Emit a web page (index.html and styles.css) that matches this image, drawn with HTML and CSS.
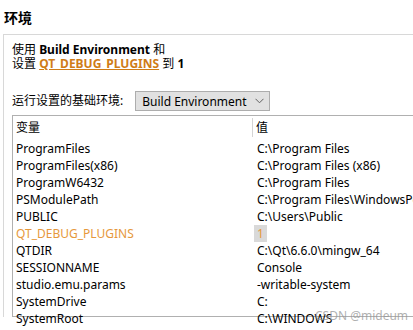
FILE: index.html
```html
<!DOCTYPE html>
<html lang="zh">
<head>
<meta charset="utf-8">
<link rel="stylesheet" href="styles.css">
</head>
<body>
<div class="page">
  <div class="title">环境</div>
  <div class="group">
    <div class="intro">
      <div class="line">使用 <b>Build Environment</b> 和</div>
      <div class="line">设置 <a class="link">QT_DEBUG_PLUGINS</a> 到 <b>1</b></div>
    </div>
    <div class="form-row">
      <span class="label">运行设置的基础环境:</span>
      <div class="combo">
        <span class="combo-text">Build Environment</span>
        <svg class="chev" width="9" height="6" viewBox="0 0 9 6"><path d="M0.5 0.8 L4.5 4.8 L8.5 0.8" fill="none" stroke="#606060" stroke-width="1"/></svg>
      </div>
    </div>
    <div class="table">
      <div class="row header">
        <div class="c1">变量</div>
        <div class="c2">值</div>
      </div>
      <div class="row"><div class="c1">ProgramFiles</div><div class="c2">C:\Program Files</div></div>
      <div class="row"><div class="c1">ProgramFiles(x86)</div><div class="c2">C:\Program Files (x86)</div></div>
      <div class="row"><div class="c1">ProgramW6432</div><div class="c2">C:\Program Files</div></div>
      <div class="row"><div class="c1">PSModulePath</div><div class="c2">C:\Program Files\WindowsPowerShell\Modules</div></div>
      <div class="row"><div class="c1">PUBLIC</div><div class="c2">C:\Users\Public</div></div>
      <div class="row changed"><div class="c1">QT_DEBUG_PLUGINS</div><div class="c2"><span class="hl">1</span></div></div>
      <div class="row"><div class="c1">QTDIR</div><div class="c2">C:\Qt\6.6.0\mingw_64</div></div>
      <div class="row"><div class="c1">SESSIONNAME</div><div class="c2">Console</div></div>
      <div class="row"><div class="c1">studio.emu.params</div><div class="c2">-writable-system</div></div>
      <div class="row"><div class="c1">SystemDrive</div><div class="c2">C:</div></div>
      <div class="row"><div class="c1">SystemRoot</div><div class="c2">C:\WINDOWS</div></div>
    </div>
  </div>
  <div class="watermark">CSDN @mideum</div>
</div>
</body>
</html>
```

FILE: styles.css
```css
html, body {
  margin: 0;
  padding: 0;
  background: #ffffff;
}
body {
  font-family: "Noto Sans", "Noto Sans CJK SC", sans-serif;
  font-size: 12px;
  color: #000;
}
.page {
  position: relative;
  width: 413px;
  height: 330px;
  overflow: hidden;
}
.title {
  font-family: "Noto Sans CJK SC", sans-serif;
  font-weight: bold;
  font-size: 14px;
  line-height: 20px;
  padding: 7px 0 0 4px;
  height: 27px;
}
.group {
  margin-left: 3px;
  border-top: 1px solid #d8d8d8;
  border-left: 1px solid #d8d8d8;
  padding: 8px 0 0 8px;
  width: 600px;
}
.intro .line {
  line-height: 14px;
  height: 14px;
  white-space: nowrap;
}
.intro b {
  font-weight: bold;
}
.link {
  color: #cf7c17;
  font-weight: bold;
  text-decoration: underline;
}
.form-row {
  margin-top: 20px;
  display: flex;
  align-items: center;
  gap: 12px;
  height: 20px;
}
.label {
  line-height: 20px;
}
.combo {
  box-sizing: border-box;
  width: 135px;
  height: 20px;
  border: 1px solid #adadad;
  background: #e1e1e1;
  display: flex;
  align-items: center;
  justify-content: space-between;
  padding: 0 5px 0 6px;
}
.chev {
  display: block;
}
.table {
  margin-top: 4px;
  border: 1px solid #b0b0b0;
  width: 560px;
  height: 200px;
}
.row {
  display: flex;
  height: 17px;
  line-height: 17px;
  white-space: nowrap;
}
.row.header {
  height: 24px;
  line-height: 24px;
}
.c1 {
  box-sizing: border-box;
  width: 240px;
  padding-left: 3px;
}
.c2 {
  padding-left: 3px;
  margin-left: 1px;
}
.header .c1 {
  border-right: 1px solid #d4d4d4;
  height: 19px;
  margin-top: 2px;
  line-height: 20px;
  width: 240px;
}
.header .c2 {
  line-height: 24px;
  padding-left: 2px;
}
.row.changed {
  color: #e6983c;
}
.hl {
  display: inline-block;
  background: #d9d9d9;
  margin-left: -3px;
  padding: 0 3px;
  height: 17px;
}
.watermark {
  position: absolute;
  left: 315px;
  top: 308px;
  font-size: 12px;
  line-height: 16px;
  color: rgba(150, 150, 150, 0.75);
  white-space: nowrap;
}
```
